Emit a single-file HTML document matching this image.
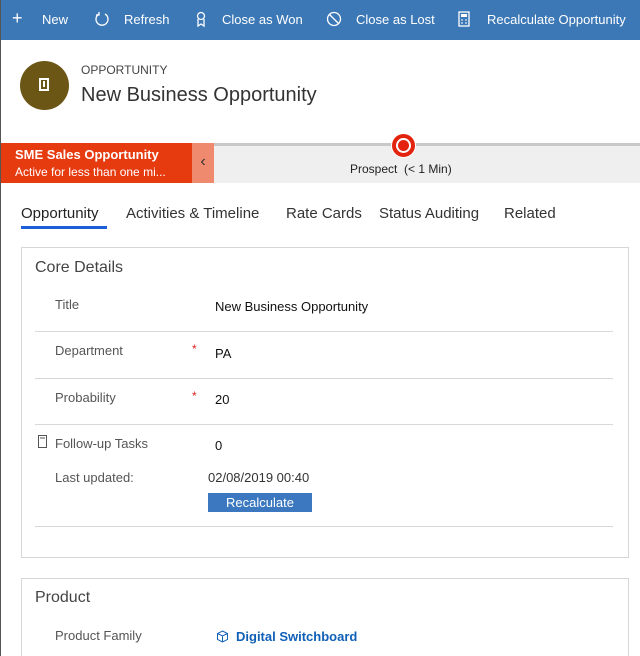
<!DOCTYPE html>
<html><head><meta charset="utf-8"><style>
*{margin:0;padding:0;box-sizing:border-box}
html,body{width:640px;height:656px;overflow:hidden}
body{background:#fff;font-family:"Liberation Sans",sans-serif;position:relative}
.abs{position:absolute;white-space:nowrap}
.tb{position:absolute;left:0;top:0;width:640px;height:40px;background:#3c78b6;color:#fff;font-size:13px}
.tb span{position:absolute;top:12px}
.lbl{color:#555;font-size:13px}
.val{color:#111;font-size:13px}
.line{position:absolute;left:35px;width:578px;height:1px;background:#d8d8d8}
.req{color:#d22;font-size:12px}
</style></head><body>
<div class="tb">
<span style="left:12px;font-size:18px;top:8px">+</span><span style="left:42px">New</span>
<svg class="abs" style="left:94px;top:11px" width="16" height="16" viewBox="0 0 16 16"><path d="M5 3A6 6 0 1 0 11 3" fill="none" stroke="#fff" stroke-width="1.3"/><path d="M5 1v3H2" fill="none" stroke="#fff" stroke-width="1.3"/></svg>
<span style="left:124px">Refresh</span>
<svg class="abs" style="left:195px;top:11px" width="12" height="17" viewBox="0 0 12 17"><circle cx="6" cy="5" r="3.5" fill="none" stroke="#fff" stroke-width="1.3"/><path d="M3 8v7l3-2 3 2V8" fill="none" stroke="#fff" stroke-width="1.3"/></svg>
<span style="left:222px">Close as Won</span>
<svg class="abs" style="left:326px;top:11px" width="16" height="16" viewBox="0 0 16 16"><circle cx="8" cy="8" r="6.5" fill="none" stroke="#fff" stroke-width="1.3"/><path d="M3.5 3.5l9 9" stroke="#fff" stroke-width="1.3"/></svg>
<span style="left:356px">Close as Lost</span>
<svg class="abs" style="left:458px;top:11px" width="12" height="16" viewBox="0 0 12 16"><rect x="1" y="1" width="10" height="14" fill="none" stroke="#fff" stroke-width="1.3"/><rect x="3" y="3" width="6" height="3" fill="#fff"/><path d="M3 9h2M7 9h2M3 12h2M7 12h2" stroke="#fff"/></svg>
<span style="left:487px">Recalculate Opportunity</span>
</div>
<div class="abs" style="left:0;top:0;width:1px;height:656px;background:#555"></div>
<div class="abs" style="left:20px;top:61px;width:49px;height:49px;border-radius:50%;background:#6b5615"></div>
<div class="abs" style="left:39px;top:78px;width:10px;height:13px;border:2px solid #fff"></div>
<div class="abs" style="left:43px;top:81px;width:2px;height:6px;background:#fff"></div>
<div class="abs" style="left:81px;top:63px;font-size:12px;color:#444">OPPORTUNITY</div>
<div class="abs" style="left:81px;top:84px;font-size:20px;color:#333">New Business Opportunity</div>
<div class="abs" style="left:1px;top:143px;width:191px;height:40px;background:#e63a0f"></div>
<div class="abs" style="left:15px;top:147px;font-size:13px;font-weight:bold;color:#fff">SME Sales Opportunity</div>
<div class="abs" style="left:15px;top:165px;font-size:12px;color:#fff">Active for less than one mi...</div>
<div class="abs" style="left:192px;top:143px;width:22px;height:40px;background:#f08a6f;color:#333;font-size:16px;text-align:center;line-height:38px">‹</div>
<div class="abs" style="left:214px;top:143px;width:426px;height:40px;background:#efefef"></div>
<div class="abs" style="left:214px;top:143px;width:426px;height:3px;background:#c9c9c9"></div>
<div class="abs" style="left:391px;top:133px;width:25px;height:25px;border-radius:50%;background:#fff"></div>
<div class="abs" style="left:392px;top:134px;width:23px;height:23px;border-radius:50%;border:4px solid #e3230e;background:#fff"></div>
<div class="abs" style="left:398px;top:140px;width:11px;height:11px;border-radius:50%;background:#e3230e"></div>
<div class="abs" style="left:350px;top:162px;font-size:12px;color:#222">Prospect&nbsp; (&lt; 1 Min)</div>
<div class="abs" style="left:21px;top:205px;font-size:15px;color:#222">Opportunity</div>
<div class="abs" style="left:21px;top:226px;width:86px;height:3px;background:#1b5fd8"></div>
<div class="abs" style="left:126px;top:205px;font-size:15px;color:#333">Activities &amp; Timeline</div>
<div class="abs" style="left:286px;top:205px;font-size:15px;color:#333">Rate Cards</div>
<div class="abs" style="left:379px;top:205px;font-size:15px;color:#333">Status Auditing</div>
<div class="abs" style="left:504px;top:205px;font-size:15px;color:#333">Related</div>
<div class="abs" style="left:21px;top:247px;width:608px;height:311px;border:1px solid #d6d6d6"></div>
<div class="abs" style="left:35px;top:259px;font-size:16px;color:#444">Core Details</div>
<div class="abs lbl" style="left:55px;top:297px">Title</div>
<div class="abs val" style="left:215px;top:299px">New Business Opportunity</div>
<div class="line" style="top:331px"></div>
<div class="abs lbl" style="left:55px;top:343px">Department</div>
<div class="abs req" style="left:192px;top:342px">*</div>
<div class="abs val" style="left:215px;top:346px">PA</div>
<div class="line" style="top:378px"></div>
<div class="abs lbl" style="left:55px;top:390px">Probability</div>
<div class="abs req" style="left:192px;top:389px">*</div>
<div class="abs val" style="left:215px;top:392px">20</div>
<div class="line" style="top:424px"></div>
<svg class="abs" style="left:38px;top:435px" width="9" height="13" viewBox="0 0 9 13"><rect x=".5" y=".5" width="8" height="12" fill="none" stroke="#555"/><path d="M2 3h5" stroke="#555"/></svg>
<div class="abs lbl" style="left:55px;top:436px">Follow-up Tasks</div>
<div class="abs val" style="left:215px;top:438px">0</div>
<div class="abs lbl" style="left:55px;top:470px">Last updated:</div>
<div class="abs" style="left:208px;top:470px;font-size:13px;color:#333">02/08/2019 00:40</div>
<div class="abs" style="left:208px;top:493px;width:104px;height:19px;background:#3b78c0;color:#fff;font-size:13px;text-align:center;line-height:19px">Recalculate</div>
<div class="line" style="top:526px"></div>
<div class="abs" style="left:21px;top:578px;width:608px;height:100px;border:1px solid #d6d6d6"></div>
<div class="abs" style="left:35px;top:589px;font-size:16px;color:#444">Product</div>
<div class="abs lbl" style="left:55px;top:628px">Product Family</div>
<svg class="abs" style="left:216px;top:630px" width="13" height="13" viewBox="0 0 13 13"><path d="M6.5 1l5 2.5v6L6.5 12l-5-2.5v-6z M1.5 3.5l5 2.5 5-2.5 M6.5 6v6" fill="none" stroke="#1160b7"/></svg>
<div class="abs" style="left:236px;top:629px;font-size:13px;font-weight:bold;color:#1160b7">Digital Switchboard</div>
</body></html>
